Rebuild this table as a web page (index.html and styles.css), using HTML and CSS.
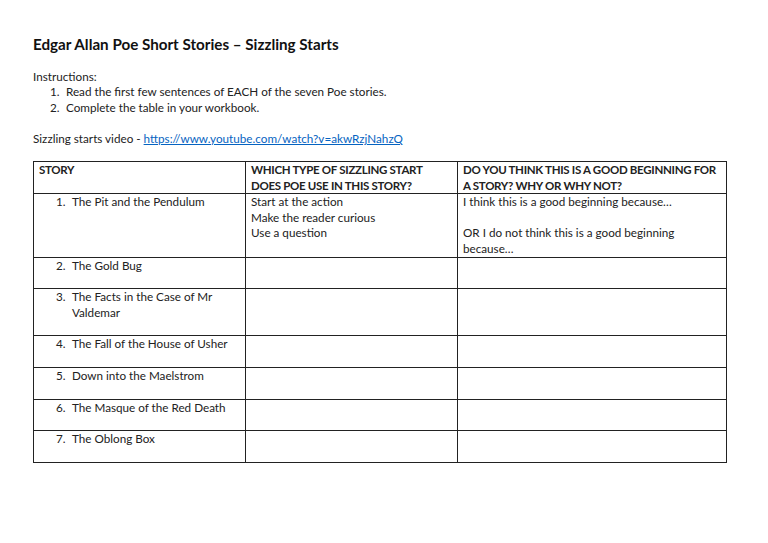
FILE: index.html
```html
<!DOCTYPE html>
<html>
<head>
<meta charset="utf-8">
<link rel="stylesheet" href="styles.css">
</head>
<body>
<div class="page">
  <h1 class="title">Edgar Allan Poe Short Stories – Sizzling Starts</h1>
  <p class="line">Instructions:</p>
  <ol class="steps">
    <li class="step"><span class="num">1.</span><span>Read the first few sentences of EACH of the seven Poe stories.</span></li>
    <li class="step"><span class="num">2.</span><span>Complete the table in your workbook.</span></li>
  </ol>
  <p class="line video">Sizzling starts video - <a class="link" href="#">https://www.youtube.com/watch?v=akwRzjNahzQ</a></p>
  <table class="grid">
    <colgroup>
      <col class="c1"><col class="c2"><col class="c3">
    </colgroup>
    <tr class="head">
      <th>STORY</th>
      <th>WHICH TYPE OF SIZZLING START DOES POE USE IN THIS STORY?</th>
      <th>DO YOU THINK THIS IS A GOOD BEGINNING FOR A STORY? WHY OR WHY NOT?</th>
    </tr>
    <tr class="r-first">
      <td><div class="story"><span class="num">1.</span><span>The Pit and the Pendulum</span></div></td>
      <td>Start at the action<br>Make the reader curious<br>Use a question</td>
      <td>I think this is a good beginning because…<br><br>OR I do not think this is a good beginning because…</td>
    </tr>
    <tr class="r1">
      <td><div class="story"><span class="num">2.</span><span>The Gold Bug</span></div></td><td></td><td></td>
    </tr>
    <tr class="r2">
      <td><div class="story"><span class="num">3.</span><span>The Facts in the Case of Mr Valdemar</span></div></td><td></td><td></td>
    </tr>
    <tr class="r1b">
      <td><div class="story"><span class="num">4.</span><span>The Fall of the House of Usher</span></div></td><td></td><td></td>
    </tr>
    <tr class="r1b">
      <td><div class="story"><span class="num">5.</span><span>Down into the Maelstrom</span></div></td><td></td><td></td>
    </tr>
    <tr class="r1">
      <td><div class="story"><span class="num">6.</span><span>The Masque of the Red Death</span></div></td><td></td><td></td>
    </tr>
    <tr class="r1b">
      <td><div class="story"><span class="num">7.</span><span>The Oblong Box</span></div></td><td></td><td></td>
    </tr>
  </table>
</div>
</body>
</html>
```
FILE: styles.css
```css
html, body {
  margin: 0;
  padding: 0;
  background: #fff;
}
.page {
  padding: 34px 0 0 33px;
  font-family: Lato, "Open Sans", sans-serif;
  font-size: 11.7px;
  line-height: 16px;
  color: #222;
}
.title {
  margin: 0 0 14px;
  font-size: 15.2px;
  line-height: 20px;
  font-weight: 700;
  color: #111;
}
.line {
  margin: 0;
}
.steps {
  list-style: none;
  margin: 0;
  padding: 0 0 0 17px;
}
.step {
  display: flex;
  line-height: 15.5px;
}
.num {
  flex: 0 0 16px;
}
.video {
  margin-top: 15px;
}
.link {
  color: #0563c1;
  text-decoration: underline;
}
.grid {
  margin-top: 15px;
  border-collapse: collapse;
  table-layout: fixed;
  width: 693px;
  line-height: 15.5px;
}
.c1 { width: 212px; }
.c2 { width: 212px; }
.c3 { width: 269px; }
.grid th, .grid td {
  border: 1px solid #222;
  padding: 0 5px;
  vertical-align: top;
  text-align: left;
}
.grid th {
  font-weight: 700;
  font-size: 11.5px;
  letter-spacing: -0.3px;
  height: 31px;
}
.r-first td { height: 63px; }
.r1 td { height: 30px; }
.r1b td { height: 31px; }
.r2 td { height: 46px; }
.story {
  display: flex;
  padding-left: 17px;
}
.story .num {
  flex: 0 0 16px;
}
```
